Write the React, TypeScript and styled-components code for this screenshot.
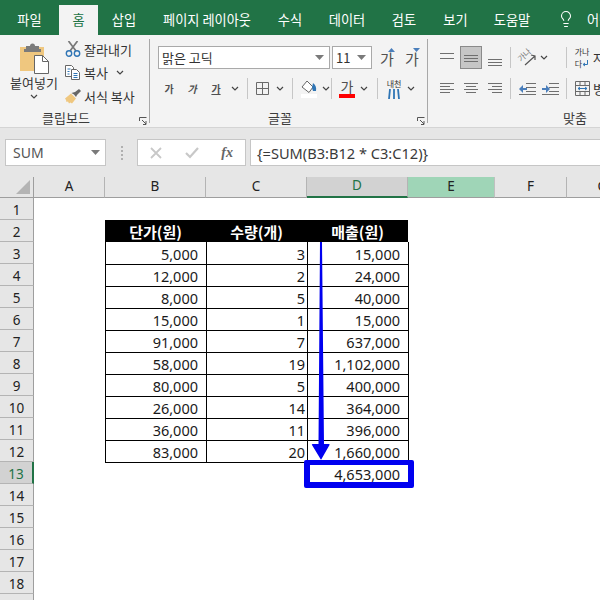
import React from "react";
import styled, { createGlobalStyle } from "styled-components";
import { Lightbulb } from "lucide-react";

const FONT = `"Noto Sans CJK KR", "Noto Sans", sans-serif`;
const GREEN = "#217346";
const ICON_GREY = "#6f6f6f";
const BLUE = "#0000f0";

const TABS = [
  { label: "파일", w: 59 },
  { label: "홈", w: 39, active: true },
  { label: "삽입", w: 52 },
  { label: "페이지 레이아웃", w: 114 },
  { label: "수식", w: 52 },
  { label: "데이터", w: 62 },
  { label: "검토", w: 52 },
  { label: "보기", w: 51 },
  { label: "도움말", w: 62 },
];

const COLUMNS = [
  { label: "A", w: 71 },
  { label: "B", w: 101 },
  { label: "C", w: 101 },
  { label: "D", w: 101, selected: true },
  { label: "E", w: 87, accent: true },
  { label: "F", w: 72 },
  { label: "G", w: 72 },
];

const DATA: [string, string, string][] = [
  ["5,000", "3", "15,000"],
  ["12,000", "2", "24,000"],
  ["8,000", "5", "40,000"],
  ["15,000", "1", "15,000"],
  ["91,000", "7", "637,000"],
  ["58,000", "19", "1,102,000"],
  ["80,000", "5", "400,000"],
  ["26,000", "14", "364,000"],
  ["36,000", "11", "396,000"],
  ["83,000", "20", "1,660,000"],
];

const ROWS = Array.from({ length: 19 }, (_, i) => i + 1);

const GlobalStyle = createGlobalStyle`
  html, body {
    margin: 0;
    padding: 0;
    background: #fff;
    overflow: hidden;
  }
  * {
    box-sizing: border-box;
  }
`;

const Page = styled.div`
  width: 600px;
  height: 600px;
  overflow: hidden;
  font-family: ${FONT};
  background: #fff;
`;

const TabBar = styled.div`
  display: flex;
  align-items: flex-end;
  height: 35px;
  background: ${GREEN};
`;

const Tab = styled.div<{ $w: number; $active?: boolean }>`
  flex: none;
  width: ${(p) => p.$w}px;
  height: 30px;
  padding-bottom: 2px;
  display: flex;
  align-items: center;
  justify-content: center;
  font-size: 13.2px;
  white-space: nowrap;
  color: ${(p) => (p.$active ? GREEN : "#fff")};
  background: ${(p) => (p.$active ? "#f3f3f3" : "transparent")};
`;

const TellMe = styled.div`
  display: flex;
  align-items: center;
  gap: 12px;
  height: 30px;
  padding: 0 0 2px 14px;
  color: #fff;
  font-size: 13.2px;
  white-space: nowrap;
`;

const Ribbon = styled.div`
  display: flex;
  height: 93px;
  background: #f3f3f3;
  border-bottom: 1px solid #d4d4d4;
`;

const Group = styled.div<{ $w: number; $pad: number }>`
  position: relative;
  flex: none;
  width: ${(p) => p.$w}px;
  padding: 11px 0 0 ${(p) => p.$pad}px;
  &::after {
    content: "";
    position: absolute;
    right: 0;
    top: 4px;
    bottom: 4px;
    width: 1px;
    background: #a8a8a8;
  }
`;

const GroupLast = styled(Group)`
  &::after {
    display: none;
  }
`;

const GroupLabel = styled.div<{ $center: number }>`
  position: absolute;
  top: 73px;
  left: ${(p) => p.$center}px;
  transform: translateX(-50%);
  font-size: 13px;
  line-height: 20px;
  color: #3c3c3c;
  white-space: nowrap;
`;

const Launcher = styled.svg`
  position: absolute;
  right: 3px;
  top: 82px;
`;

const ClipboardBody = styled.div`
  display: flex;
  margin-top: -3px;
`;

const PasteButton = styled.div`
  flex: none;
  width: 52px;
  display: flex;
  flex-direction: column;
  align-items: center;
  font-size: 13px;
  line-height: 16px;
  color: #333;
`;

const PasteText = styled.div`
  margin: 1px 0 3px;
  white-space: nowrap;
`;

const ClipActions = styled.div`
  display: flex;
  flex-direction: column;
  gap: 3.5px;
  margin: -4px 0 0 5px;
  font-size: 13px;
  color: #333;
`;

const ClipAction = styled.div`
  display: flex;
  align-items: center;
  height: 20px;
  gap: 3px;
  white-space: nowrap;
`;

const ToolRow = styled.div`
  display: flex;
  align-items: center;
  height: 23px;
  & + & {
    margin-top: 8px;
  }
`;

const Field = styled.div<{ $w: number }>`
  flex: none;
  width: ${(p) => p.$w}px;
  height: 23px;
  margin-right: 2px;
  padding: 0 5px 0 3px;
  display: flex;
  align-items: center;
  justify-content: space-between;
  background: #fff;
  border: 1px solid #a9a9a9;
  font-size: 13px;
  color: #333;
`;

const Slot = styled.div<{ $w: number; $size?: number; $weight?: number; $under?: boolean }>`
  position: relative;
  flex: none;
  width: ${(p) => p.$w}px;
  height: 22px;
  display: flex;
  align-items: center;
  justify-content: center;
  color: #505050;
  font-size: ${(p) => p.$size ?? 12}px;
  font-weight: ${(p) => p.$weight ?? 400};
  text-decoration: ${(p) => (p.$under ? "underline" : "none")};
  white-space: nowrap;
`;

const ActiveSlot = styled(Slot)`
  height: 23px;
  margin: 0 2px;
  background: #c6c6c6;
  border: 1px solid #8a8a8a;
`;

const ToolSep = styled.div<{ $left: number; $right: number }>`
  flex: none;
  width: 1px;
  height: 21px;
  margin: 0 ${(p) => p.$right}px 0 ${(p) => p.$left}px;
  background: #c6c6c6;
`;

const StackedIcon = styled.div`
  flex: none;
  width: 22px;
  display: flex;
  flex-direction: column;
  align-items: center;
`;

const GrowButton = styled.div<{ $left: number }>`
  position: relative;
  flex: none;
  width: 14px;
  height: 23px;
  margin-left: ${(p) => p.$left}px;
  padding-top: 4px;
  font-size: 15px;
  line-height: 18px;
  color: #505050;
`;

const GrowArrow = styled.svg`
  position: absolute;
  right: -1px;
  top: 2px;
`;

const FontColorMark = styled.div`
  display: flex;
  flex-direction: column;
  align-items: center;
  width: 22px;
  font-size: 14px;
  line-height: 15px;
  color: #505050;
`;

const ColorBar = styled.div<{ $color: string }>`
  width: 16px;
  height: 4px;
  background: ${(p) => p.$color};
`;

const BoxLabel = styled.div`
  font-size: 8px;
  line-height: 11.6px;
  color: #333;
  white-space: nowrap;
  display: flex;
  align-items: center;
`;

const OrientLabel = styled.span`
  position: absolute;
  left: 1px;
  top: 2px;
  font-size: 8px;
  line-height: 12px;
  color: #777;
  transform: rotate(-42deg);
`;

const CutText = styled.span`
  font-size: 13px;
  color: #333;
  white-space: nowrap;
`;

const FormulaStrip = styled.div`
  display: flex;
  align-items: center;
  height: 49px;
  padding: 0 0 0 5px;
  background: #e6e6e6;
`;

const NameBox = styled.div`
  flex: none;
  width: 101px;
  height: 27px;
  padding: 0 5px 0 7px;
  display: flex;
  align-items: center;
  justify-content: space-between;
  background: #fff;
  border: 1px solid #c6c6c6;
  font-family: "Noto Sans", sans-serif;
  font-size: 14px;
  color: #555;
`;

const Grip = styled.div`
  flex: none;
  width: 31px;
  display: flex;
  flex-direction: column;
  align-items: center;
  gap: 2px;
`;

const GripDot = styled.span`
  width: 2px;
  height: 2px;
  background: #b0b0b0;
`;

const FormulaButtons = styled.div`
  flex: none;
  width: 109px;
  height: 27px;
  padding: 0 12px 0 12px;
  display: flex;
  align-items: center;
  justify-content: space-between;
  background: #fff;
  border: 1px solid #c6c6c6;
`;

const FxMark = styled.span`
  font-family: "Liberation Serif", serif;
  font-style: italic;
  font-weight: 700;
  font-size: 14px;
  color: #666;
`;

const FormulaInput = styled.div`
  flex: 1;
  height: 27px;
  margin-left: 4px;
  padding-left: 6px;
  display: flex;
  align-items: center;
  background: #fff;
  border: 1px solid #c6c6c6;
  border-right: none;
  font-family: "Noto Sans", sans-serif;
  font-size: 14.6px;
  color: #3a3a3a;
  white-space: nowrap;
`;

const SheetWrap = styled.div`
  position: relative;
`;

const Sheet = styled.div`
  display: grid;
  grid-template-columns: 34px ${COLUMNS.map((c) => `${c.w}px`).join(" ")};
  grid-template-rows: 21px;
  grid-auto-rows: 22px;
  width: 639px;
`;

const Corner = styled.div`
  position: relative;
  background: #e6e6e6;
  border-right: 1px solid #9e9e9e;
  border-bottom: 1px solid #9e9e9e;
  &::after {
    content: "";
    position: absolute;
    right: 3px;
    bottom: 3px;
    border-style: solid;
    border-width: 0 0 14px 14px;
    border-color: transparent transparent #b4b4b4 transparent;
  }
`;

const ColHead = styled.div<{ $selected?: boolean; $accent?: boolean }>`
  display: flex;
  align-items: center;
  justify-content: center;
  padding-bottom: 3px;
  font-family: "Noto Sans", sans-serif;
  font-size: 13.5px;
  color: ${(p) => (p.$selected ? GREEN : "#222")};
  background: ${(p) => (p.$selected ? "#d2d2d2" : p.$accent ? "#9fd5b7" : "#e6e6e6")};
  border-right: 1px solid ${(p) => (p.$accent ? "#c0c0c0" : "#b4b4b4")};
  border-bottom: ${(p) => (p.$selected ? `2px solid ${GREEN}` : "1px solid #9e9e9e")};
`;

const RowHead = styled.div<{ $selected?: boolean }>`
  display: flex;
  align-items: center;
  justify-content: center;
  padding-top: 2px;
  font-family: "Noto Sans", sans-serif;
  font-size: 13.5px;
  color: ${(p) => (p.$selected ? GREEN : "#222")};
  background: ${(p) => (p.$selected ? "#d2d2d2" : "#e6e6e6")};
  border-right: ${(p) => (p.$selected ? `2px solid ${GREEN}` : "1px solid #9e9e9e")};
  border-bottom: 1px solid #b4b4b4;
`;

const Cell = styled.div<{ $left?: boolean; $top?: boolean; $pad?: number }>`
  display: flex;
  align-items: center;
  justify-content: flex-end;
  padding-right: ${(p) => p.$pad ?? 8}px;
  padding-top: 1px;
  font-family: "Noto Sans", sans-serif;
  font-size: 14.5px;
  color: #1a1a1a;
  background: #fff;
  border-left: ${(p) => (p.$left ? "1px solid #000" : "none")};
  border-top: ${(p) => (p.$top ? "1px solid #000" : "none")};
`;

const HeadCell = styled.div`
  display: flex;
  align-items: center;
  justify-content: center;
  background: #000;
  color: #fff;
  font-size: 15px;
  font-weight: 700;
`;

const SumBox = styled.div`
  position: absolute;
  left: 304px;
  top: 283px;
  width: 110px;
  height: 28px;
  border: 6px solid ${BLUE};
  border-top-width: 5px;
  border-radius: 2px;
`;

const ArrowOverlay = styled.svg`
  position: absolute;
  left: 310px;
  top: 65px;
`;

const Chevron = () => (
  <svg width="8" height="5" viewBox="0 0 8 5">
    <path d="M1 1l3 3 3-3" fill="none" stroke="#444" strokeWidth="1.2" />
  </svg>
);

const Caret = () => (
  <svg width="9" height="5" viewBox="0 0 9 5">
    <path d="M0 0h9L4.500 5z" fill="#7a7a7a" />
  </svg>
);

const PasteIcon = () => (
  <svg width="29" height="31" viewBox="0 0 29 31">
    <path d="M0 4h24v24H0z" fill="#efc77f" />
    <path d="M6 3h4a2.500 2.500 0 0 1 5 0h4v3h2v3H4V6h2z" fill="#7b7b7b" />
    <path d="M14.500 12.500h8l6 6v12h-14z" fill="#fff" stroke="#666" />
    <path d="M22.500 12.500v6h6" fill="none" stroke="#666" />
  </svg>
);

const ScissorsIcon = () => (
  <svg width="16" height="16" viewBox="0 0 16 16">
    <path d="M3.500 0l7.500 10M12.500 0L5 10" stroke="#777" strokeWidth="1.7" fill="none" />
    <circle cx="4" cy="12.500" r="2.700" fill="none" stroke="#2f75b5" strokeWidth="1.400" />
    <circle cx="12" cy="12.500" r="2.700" fill="none" stroke="#2f75b5" strokeWidth="1.400" />
  </svg>
);

const CopyIcon = () => (
  <svg width="16" height="15" viewBox="0 0 16 15">
    <path d="M.5.5h6l2 2v9H.5z" fill="#fff" stroke="#666" />
    <path d="M6.500 4.500h5l3 3v7h-8z" fill="#fff" stroke="#666" />
    <path d="M2.500 4h3M2.500 6.500h2M2.500 9h2M8.500 8.500h4M8.500 10.500h4M8.500 12.500h4" stroke="#2f75b5" />
  </svg>
);

const BrushIcon = () => (
  <svg width="16" height="15" viewBox="0 0 16 15">
    <path d="M0 9.500l6-5 5 5-4 5-1.500-1-1.500 1-1-2-1.500.5-.5-2z" fill="#efc77f" />
    <path d="M6.500 4L9 5.500l2 2.500 1-2L16 2l-2-2-4 3z" fill="#666" />
  </svg>
);

const LauncherIcon = () => (
  <Launcher width="8" height="8" viewBox="0 0 8 8">
    <path d="M.5 4V.5H7.500M3 3l4 4M7 4v3.500H4" fill="none" stroke="#555" />
  </Launcher>
);

const BordersIcon = () => (
  <svg width="13" height="13" viewBox="0 0 13 13">
    <path d="M.5.5h12v12H.5zM6.500.5v12M.5 6.500h12" fill="none" stroke="#6a6a6a" />
  </svg>
);

const FillIcon = () => (
  <FontColorMark>
    <svg width="16" height="14" viewBox="0 0 16 14">
      <path d="M6 1l6 6-4 5.500-7-5.500z" fill="#fff" stroke="#666" />
      <path d="M12 3c3 2 3.500 5 3 8h-3l-1-3z" fill="#2f75b5" />
    </svg>
    <ColorBar $color="#fff" />
  </FontColorMark>
);

const GrowIcon = ({ left, down }: { left: number; down?: boolean }) => (
  <GrowButton $left={left}>
    가
    <GrowArrow width="7" height="4" viewBox="0 0 7 4">
      <path d={down ? "M0 0h7L3.500 4z" : "M0 4h7L3.500 0z"} fill="#4a7ebb" />
    </GrowArrow>
  </GrowButton>
);

const Lines = ({ rows, h = 16 }: { rows: [number, number, number][]; h?: number }) => (
  <svg width="16" height={h} viewBox={`0 0 16 ${h}`}>
    {rows.map(([x1, x2, y]) => (
      <path key={y} d={`M${x1} ${y + 0.5}H${x2}`} stroke={ICON_GREY} />
    ))}
  </svg>
);

const IndentIcon = ({ right }: { right?: boolean }) => (
  <svg width="18" height="12" viewBox="0 0 18 12">
    <path d="M8 .5h10M8 4.500h10M8 8.500h10M1 11.500h17" stroke={ICON_GREY} />
    <path d={right ? "M1 5h4V2l4 4-4 4V7H1z" : "M9 5H5V2L1 6l4 4V7h4z"} fill="#4a7ebb" />
  </svg>
);

const OrientArrow = () => (
  <svg width="20" height="20" viewBox="0 0 20 20">
    <path d="M8 17L18 8M14 7l4 1v4" fill="none" stroke="#555" strokeWidth="1.200" />
  </svg>
);

const MergeIcon = () => (
  <svg width="15" height="15" viewBox="0 0 15 15">
    <path d="M.5.5h14v14H.5zM.5 4.500h14M.5 10.500h14M5 .5v4M10 .5v4M5 10.500v4M10 10.500v4" fill="none" stroke="#6a6a6a" />
    <path d="M3 7.500h9M3 7.500l2-1.500M3 7.500l2 1.500M12 7.500l-2-1.500M12 7.500l-2 1.500" stroke="#2f75b5" fill="none" />
  </svg>
);

const WrapArrow = () => (
  <svg width="7" height="7" viewBox="0 0 7 7">
    <path d="M5.500 0v4.500H1.500M3 3L1 4.500 3 6" fill="none" stroke="#2f75b5" />
  </svg>
);

const CancelIcon = () => (
  <svg width="12" height="12" viewBox="0 0 12 12">
    <path d="M1 1l10 10M11 1L1 11" stroke="#c8c8c8" strokeWidth="1.800" />
  </svg>
);

const CheckIcon = () => (
  <svg width="14" height="12" viewBox="0 0 14 12">
    <path d="M1 6l4 4 8-9" fill="none" stroke="#c8c8c8" strokeWidth="2.200" />
  </svg>
);

const ClipboardGroup = () => (
  <Group $w={150} $pad={8}>
    <ClipboardBody>
      <PasteButton>
        <PasteIcon />
        <PasteText>붙여넣기</PasteText>
        <Chevron />
      </PasteButton>
      <ClipActions>
        <ClipAction>
          <ScissorsIcon />
          <span>잘라내기</span>
        </ClipAction>
        <ClipAction>
          <CopyIcon />
          <span>복사</span>
          <Slot $w={18}>
            <Chevron />
          </Slot>
        </ClipAction>
        <ClipAction>
          <BrushIcon />
          <span>서식 복사</span>
        </ClipAction>
      </ClipActions>
    </ClipboardBody>
    <GroupLabel $center={66}>클립보드</GroupLabel>
    <LauncherIcon />
  </Group>
);

const FontGroup = () => (
  <Group $w={278} $pad={8}>
    <ToolRow>
      <Field $w={172}>
        <span>맑은 고딕</span>
        <Caret />
      </Field>
      <Field $w={40}>
        <span>11</span>
        <Caret />
      </Field>
      <GrowIcon left={6} />
      <GrowIcon left={11} down />
    </ToolRow>
    <ToolRow>
      <Slot $w={22} $size={10} $weight={700}>
        가
      </Slot>
      <Slot $w={24} $size={10} $weight={700}>
        <i>가</i>
      </Slot>
      <Slot $w={24} $size={10} $weight={700} $under>
        가
      </Slot>
      <Slot $w={13}>
        <Chevron />
      </Slot>
      <ToolSep $left={6} $right={3} />
      <Slot $w={22}>
        <BordersIcon />
      </Slot>
      <Slot $w={14}>
        <Chevron />
      </Slot>
      <ToolSep $left={5} $right={5} />
      <Slot $w={22}>
        <FillIcon />
      </Slot>
      <Slot $w={11}>
        <Chevron />
      </Slot>
      <ToolSep $left={0} $right={4} />
      <Slot $w={22}>
        <FontColorMark>
          <span>가</span>
          <ColorBar $color="#ff0000" />
        </FontColorMark>
      </Slot>
      <Slot $w={12}>
        <Chevron />
      </Slot>
      <ToolSep $left={7} $right={5} />
      <Slot $w={22}>
        <StackedIcon>
          <BoxLabel>내천</BoxLabel>
          <svg width="12" height="10" viewBox="0 0 12 10">
            <path d="M2 0l-1 10M6 0v10M10 0l1 10" stroke="#2f75b5" strokeWidth="1.800" />
          </svg>
        </StackedIcon>
      </Slot>
      <Slot $w={12}>
        <Chevron />
      </Slot>
    </ToolRow>
    <GroupLabel $center={130}>글꼴</GroupLabel>
    <LauncherIcon />
  </Group>
);

const AlignGroup = () => (
  <GroupLast $w={172} $pad={8}>
    <ToolRow>
      <Slot $w={22}>
        <Lines rows={[[1, 15, 3], [1, 15, 8]]} />
      </Slot>
      <ActiveSlot $w={22}>
        <Lines rows={[[1, 15, 5], [1, 15, 8], [1, 15, 11]]} />
      </ActiveSlot>
      <Slot $w={22}>
        <Lines rows={[[1, 15, 9], [1, 15, 12], [1, 15, 15]]} />
      </Slot>
      <ToolSep $left={4} $right={5} />
      <Slot $w={22}>
        <OrientLabel>가나</OrientLabel>
        <OrientArrow />
      </Slot>
      <Slot $w={11}>
        <Chevron />
      </Slot>
      <ToolSep $left={17} $right={4} />
      <Slot $w={22}>
        <StackedIcon>
          <BoxLabel>가나</BoxLabel>
          <BoxLabel>
            다<WrapArrow />
          </BoxLabel>
        </StackedIcon>
      </Slot>
      <CutText>자동</CutText>
    </ToolRow>
    <ToolRow>
      <Slot $w={22}>
        <Lines rows={[[1, 15, 2], [1, 11, 5], [1, 15, 8], [1, 11, 11]]} />
      </Slot>
      <Slot $w={26}>
        <Lines rows={[[1, 15, 2], [3, 13, 5], [1, 15, 8], [3, 13, 11]]} />
      </Slot>
      <Slot $w={22}>
        <Lines rows={[[1, 15, 2], [5, 15, 5], [1, 15, 8], [5, 15, 11]]} />
      </Slot>
      <ToolSep $left={4} $right={5} />
      <Slot $w={22}>
        <IndentIcon />
      </Slot>
      <Slot $w={24}>
        <IndentIcon right />
      </Slot>
      <ToolSep $left={4} $right={4} />
      <Slot $w={22}>
        <MergeIcon />
      </Slot>
      <CutText>병합</CutText>
    </ToolRow>
    <GroupLabel $center={147}>맞춤</GroupLabel>
  </GroupLast>
);

const FormulaBar = () => (
  <FormulaStrip>
    <NameBox>
      <span>SUM</span>
      <Caret />
    </NameBox>
    <Grip>
      <GripDot />
      <GripDot />
      <GripDot />
      <GripDot />
    </Grip>
    <FormulaButtons>
      <CancelIcon />
      <CheckIcon />
      <FxMark>fx</FxMark>
    </FormulaButtons>
    <FormulaInput>{"{=SUM(B3:B12 * C3:C12)}"}</FormulaInput>
  </FormulaStrip>
);

const rowCells = (row: number) => {
  if (row === 2) {
    return [
      <Cell key="a" />,
      <HeadCell key="b">단가(원)</HeadCell>,
      <HeadCell key="c">수량(개)</HeadCell>,
      <HeadCell key="d">매출(원)</HeadCell>,
      <Cell key="e" />,
    ];
  }
  if (row >= 3 && row <= 12) {
    const [price, qty, sales] = DATA[row - 3];
    return [
      <Cell key="a" />,
      <Cell key="b" $left $top={row > 3}>
        {price}
      </Cell>,
      <Cell key="c" $left $top={row > 3} $pad={2}>
        {qty}
      </Cell>,
      <Cell key="d" $left $top={row > 3}>
        {sales}
      </Cell>,
      <Cell key="e" $left />,
    ];
  }
  if (row === 13) {
    return [
      <Cell key="a" />,
      <Cell key="b" $top />,
      <Cell key="c" $top />,
      <Cell key="d" $top>
        4,653,000
      </Cell>,
      <Cell key="e" />,
    ];
  }
  return ["a", "b", "c", "d", "e"].map((k) => <Cell key={k} />);
};

const App: React.FC = () => {
  return (
    <Page>
      <GlobalStyle />
      <TabBar>
        {TABS.map((t) => (
          <Tab key={t.label} $w={t.w} $active={t.active}>
            {t.label}
          </Tab>
        ))}
        <TellMe>
          <Lightbulb size={18} strokeWidth={1.4} />
          <span>어떤</span>
        </TellMe>
      </TabBar>
      <Ribbon>
        <ClipboardGroup />
        <FontGroup />
        <AlignGroup />
      </Ribbon>
      <FormulaBar />
      <SheetWrap>
        <Sheet>
          <Corner />
          {COLUMNS.map((c) => (
            <ColHead key={c.label} $selected={c.selected} $accent={c.accent}>
              {c.label}
            </ColHead>
          ))}
          {ROWS.map((row) => (
            <React.Fragment key={row}>
              <RowHead $selected={row === 13}>{row}</RowHead>
              {rowCells(row)}
              <Cell />
              <Cell />
            </React.Fragment>
          ))}
        </Sheet>
        <ArrowOverlay width="22" height="220" viewBox="0 0 22 220">
          <path
            d="M10 0h2l2 202h5q1 0 .500 1L11.500 217q-.5 1-1 0L2 203q-.5-1 .500-1h6z"
            fill={BLUE}
          />
        </ArrowOverlay>
        <SumBox />
      </SheetWrap>
    </Page>
  );
};

export default App;
